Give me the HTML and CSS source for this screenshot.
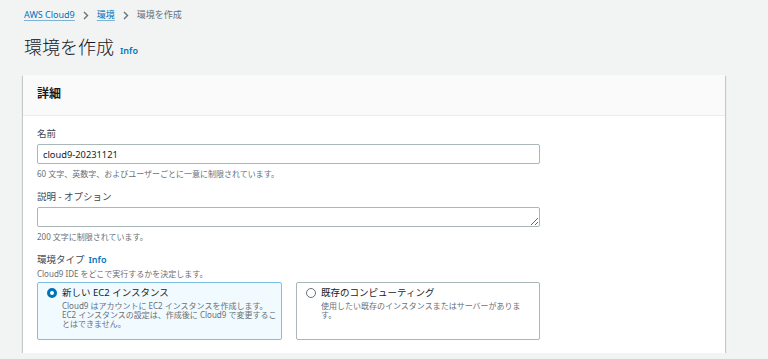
FILE: index.html
```html
<!DOCTYPE html>
<html lang="ja">
<head>
    <meta charset="UTF-8">
    <meta name="viewport" content="width=device-width, initial-scale=1.0">
    <title>環境を作成</title>
    <link rel="stylesheet" href="styles.css">
</head>
<body>
    <div class="page">
        <nav class="breadcrumbs">
            <a href="#">AWS Cloud9</a>
            <svg class="chevron" viewBox="0 0 6 9"><polyline points="1,1 4.5,4.5 1,8"/></svg>
            <a href="#">環境</a>
            <svg class="chevron" viewBox="0 0 6 9"><polyline points="1,1 4.5,4.5 1,8"/></svg>
            <span class="current">環境を作成</span>
        </nav>

        <h1 class="title"><span>環境を作成</span> <a href="#" class="info">Info</a></h1>

        <div class="card">
            <div class="card-header">詳細</div>
            <div class="card-body">
                <div class="field">
                    <label class="label" for="name">名前</label>
                    <input class="input" id="name" type="text" value="cloud9-20231121">
                    <div class="hint">60 文字、英数字、およびユーザーごとに一意に制限されています。</div>
                </div>

                <div class="field">
                    <label class="label" for="desc">説明 - オプション</label>
                    <textarea class="input textarea" id="desc"></textarea>
                    <div class="hint">200 文字に制限されています。</div>
                </div>

                <div class="field">
                    <div class="label"><span>環境タイプ</span> <a href="#" class="info">Info</a></div>
                    <div class="field-desc">Cloud9 IDE をどこで実行するかを決定します。</div>
                    <div class="tiles">
                        <div class="tile selected">
                            <span class="radio"></span>
                            <div class="tile-title">新しい EC2 インスタンス</div>
                            <div class="tile-desc">Cloud9 はアカウントに EC2 インスタンスを作成します。EC2 インスタンスの設定は、作成後に Cloud9 で変更することはできません。</div>
                        </div>
                        <div class="tile">
                            <span class="radio"></span>
                            <div class="tile-title">既存のコンピューティング</div>
                            <div class="tile-desc">使用したい既存のインスタンスまたはサーバーがありま<br>す。</div>
                        </div>
                    </div>
                </div>
            </div>
        </div>
    </div>
</body>
</html>
```

FILE: styles.css
```css
/* AWS console - create environment */
body {
    margin: 0;
    background: #f2f3f3;
    font-family: 'Noto Sans', 'Noto Sans CJK JP', sans-serif;
    color: #16191f;
}

.page {
    padding: 8px 23px 0;
}

.breadcrumbs {
    display: flex;
    align-items: center;
    gap: 8px;
    height: 14px;
    padding-left: 1px;
    font-size: 9px;
    line-height: 14px;
}

.breadcrumbs a {
    color: #0073bb;
    text-decoration: underline;
    text-decoration-color: rgba(0, 115, 187, 0.5);
    text-underline-offset: 2px;
}

.breadcrumbs .current {
    color: #687078;
}

.chevron {
    width: 6px;
    height: 9px;
    fill: none;
    stroke: #687078;
    stroke-width: 1.4;
}

.title {
    display: flex;
    align-items: baseline;
    gap: 6px;
    height: 24px;
    margin: 13px 0 0 1px;
    font-size: 18px;
    font-weight: 300;
    line-height: 24px;
    color: #16191f;
}

.info {
    color: #0073bb;
    font-size: 9px;
    font-weight: 600;
    line-height: 1;
    text-decoration: none;
}

.card {
    margin-top: 16px;
    width: 702px;
    background: #fff;
    box-shadow: 0 1px 1px 0 rgba(0, 28, 36, 0.3), 1px 1px 1px 0 rgba(0, 28, 36, 0.15), -1px 1px 1px 0 rgba(0, 28, 36, 0.15);
}

.card-header {
    height: 16px;
    padding: 11px 14px 13px;
    background: #fafafa;
    border-bottom: 1px solid #eaeded;
    font-size: 12px;
    font-weight: bold;
    line-height: 16px;
}

.card-body {
    padding: 12px 14px 13px;
}

.field + .field {
    margin-top: 12px;
}

.label {
    display: flex;
    align-items: baseline;
    gap: 4px;
    height: 12px;
    font-size: 9.5px;
    line-height: 12px;
    color: #414750;
}

.input {
    display: block;
    box-sizing: border-box;
    width: 503px;
    height: 20px;
    margin-top: 4px;
    padding: 0 5px;
    border: 1px solid #aab7b8;
    border-radius: 2px;
    font-family: 'Noto Sans', 'Noto Sans CJK JP', sans-serif;
    font-size: 9.3px;
    color: #16191f;
    background: #fff;
}

.textarea {
    resize: vertical;
}

.hint,
.field-desc {
    height: 10px;
    font-size: 8px;
    line-height: 10px;
    color: #687078;
}

.hint {
    margin-top: 5px;
}

.field-desc {
    margin-top: 3px;
}

.tiles {
    display: grid;
    grid-template-columns: 245px 244px;
    gap: 14px;
    margin-top: 3px;
}

.tile {
    display: grid;
    grid-template-columns: 10px 1fr;
    column-gap: 5px;
    align-items: center;
    align-content: start;
    padding: 4px 4px 11px 9px;
    border: 1px solid #aab7b8;
    border-radius: 2px;
    background: #fff;
}

.tile.selected {
    border-color: #7cc0e6;
    background: #f1faff;
}

.radio {
    box-sizing: border-box;
    width: 10px;
    height: 10px;
    border: 1px solid #687078;
    border-radius: 50%;
    background: #fff;
}

.selected .radio {
    border: 3px solid #0073bb;
}

.tile-title {
    font-size: 9.5px;
    line-height: 12px;
    color: #16191f;
}

.tile-desc {
    grid-column: 2;
    margin-top: 2px;
    font-size: 8px;
    line-height: 9px;
    color: #687078;
}
```
